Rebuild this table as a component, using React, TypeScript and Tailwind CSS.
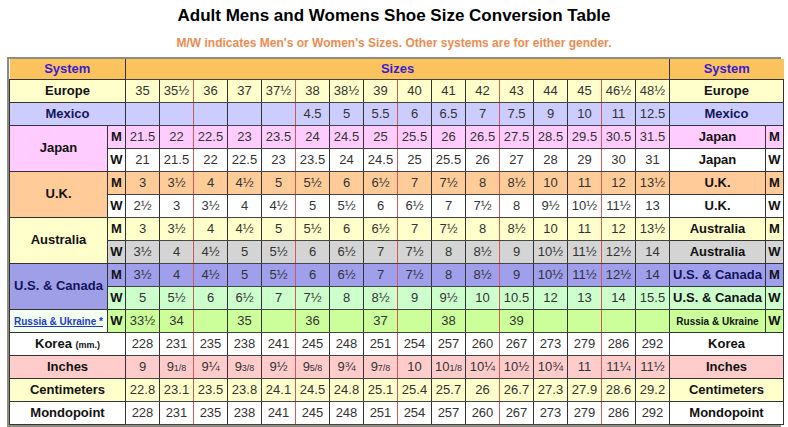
import React from 'react';

type Cell = React.ReactNode;

interface SizeRow {
  label: React.ReactNode;
  rightLabel?: React.ReactNode;
  bg: string;
  values: Cell[];
  mw?: 'M' | 'W';
  // label cell spans 2 rows (first row of a pair)
  labelSpan?: number;
  labelBg?: string;
  hideLabel?: boolean;
  rightBg?: string;
}

const frac = (whole: string, f: string) => (
  <span>
    {whole}
    <span className="text-[9px]">{f}</span>
  </span>
);

const rows: SizeRow[] = [
  {
    label: 'Europe',
    bg: 'bg-[#ffffcc]',
    values: ['35', '35½', '36', '37', '37½', '38', '38½', '39', '40', '41', '42', '43', '44', '45', '46½', '48½'],
  },
  {
    label: <span className="text-[#14145a]">Mexico</span>,
    rightLabel: <span className="text-[#14145a]">Mexico</span>,
    bg: 'bg-[#ccccff]',
    values: ['', '', '', '', '', '4.5', '5', '5.5', '6', '6.5', '7', '7.5', '9', '10', '11', '12.5'],
  },
  {
    label: 'Japan',
    labelSpan: 2,
    labelBg: 'bg-[#ffccff]',
    mw: 'M',
    bg: 'bg-[#ffccff]',
    values: ['21.5', '22', '22.5', '23', '23.5', '24', '24.5', '25', '25.5', '26', '26.5', '27.5', '28.5', '29.5', '30.5', '31.5'],
  },
  {
    label: 'Japan',
    hideLabel: true,
    mw: 'W',
    bg: 'bg-white',
    values: ['21', '21.5', '22', '22.5', '23', '23.5', '24', '24.5', '25', '25.5', '26', '27', '28', '29', '30', '31'],
  },
  {
    label: 'U.K.',
    labelSpan: 2,
    labelBg: 'bg-[#ffcc99]',
    mw: 'M',
    bg: 'bg-[#ffcc99]',
    values: ['3', '3½', '4', '4½', '5', '5½', '6', '6½', '7', '7½', '8', '8½', '10', '11', '12', '13½'],
  },
  {
    label: 'U.K.',
    hideLabel: true,
    mw: 'W',
    bg: 'bg-white',
    values: ['2½', '3', '3½', '4', '4½', '5', '5½', '6', '6½', '7', '7½', '8', '9½', '10½', '11½', '13'],
  },
  {
    label: 'Australia',
    labelSpan: 2,
    labelBg: 'bg-[#ffffcc]',
    mw: 'M',
    bg: 'bg-[#ffffcc]',
    values: ['3', '3½', '4', '4½', '5', '5½', '6', '6½', '7', '7½', '8', '8½', '10', '11', '12', '13½'],
  },
  {
    label: 'Australia',
    hideLabel: true,
    mw: 'W',
    bg: 'bg-[#d4d4d4]',
    values: ['3½', '4', '4½', '5', '5½', '6', '6½', '7', '7½', '8', '8½', '9', '10½', '11½', '12½', '14'],
  },
  {
    label: <span className="text-[#14145a]">U.S. &amp; Canada</span>,
    rightLabel: <span className="text-[#14145a]">U.S. &amp; Canada</span>,
    labelSpan: 2,
    labelBg: 'bg-[#9f9fe8]',
    mw: 'M',
    bg: 'bg-[#9f9fec]',
    values: ['3½', '4', '4½', '5', '5½', '6', '6½', '7', '7½', '8', '8½', '9', '10½', '11½', '12½', '14'],
  },
  {
    label: 'U.S. & Canada',
    hideLabel: true,
    mw: 'W',
    bg: 'bg-[#ccffcc]',
    values: ['5', '5½', '6', '6½', '7', '7½', '8', '8½', '9', '9½', '10', '10.5', '12', '13', '14', '15.5'],
  },
  {
    label: (
      <span className="text-[10px] text-[#1a3cc8] underline">Russia &amp; Ukraine *</span>
    ),
    rightLabel: <span className="text-[10px]">Russia &amp; Ukraine</span>,
    labelBg: 'bg-[#f4fff0]',
    mw: 'W',
    bg: 'bg-[#ccff99]',
    values: ['33½', '34', '', '35', '', '36', '', '37', '', '38', '', '39', '', '', '', ''],
  },
  {
    label: (
      <span>
        Korea <span className="text-[9px]">(mm.)</span>
      </span>
    ),
    rightLabel: 'Korea',
    bg: 'bg-white',
    values: ['228', '231', '235', '238', '241', '245', '248', '251', '254', '257', '260', '267', '273', '279', '286', '292'],
  },
  {
    label: 'Inches',
    bg: 'bg-[#ffcccc]',
    values: [
      '9', frac('9', '1/8'), '9¼', frac('9', '3/8'), '9½', frac('9', '5/8'), '9¾', frac('9', '7/8'),
      '10', frac('10', '1/8'), '10¼', '10½', '10¾', '11', '11¼', '11½',
    ],
  },
  {
    label: 'Centimeters',
    bg: 'bg-[#ffffcc]',
    values: ['22.8', '23.1', '23.5', '23.8', '24.1', '24.5', '24.8', '25.1', '25.4', '25.7', '26', '26.7', '27.3', '27.9', '28.6', '29.2'],
  },
  {
    label: 'Mondopoint',
    bg: 'bg-white',
    values: ['228', '231', '235', '238', '241', '245', '248', '251', '254', '257', '260', '267', '273', '279', '286', '292'],
  },
];

// borders drawn in red between some size columns
const redAfter = [1, 4, 7, 10, 13];

export default function App() {
  return (
    <div className="w-[788px] h-[427px] bg-white font-['Liberation_Sans',Arial,sans-serif] overflow-hidden">
      <h1 className="pt-[6px] text-center text-[17px] leading-[20px] font-bold text-black">
        Adult Mens and Womens Shoe Size Conversion Table
      </h1>
      <p className="mt-[9px] text-center text-[12px] leading-[16px] font-bold text-[#ec8b4f]">
        M/W indicates Men's or Women's Sizes. Other systems are for either gender.
      </p>
      <div className="ml-[7px] mt-[6px] w-[774px] border-2 border-[#8c8c80]">
        <table className="w-full table-fixed border-collapse text-[13px] text-[#333]">
          <colgroup>
            <col className="w-[98px]" />
            <col className="w-[18px]" />
            {Array.from({ length: 16 }).map((_, i) => (
              <col key={i} className="w-[34px]" />
            ))}
            <col className="w-[96px]" />
            <col className="w-[18px]" />
          </colgroup>
          <tbody>
            <tr className="h-[20px] bg-[#fbc35e]">
              <td colSpan={2} className="border-r border-[#333] p-0 text-center font-bold text-[#3a1ccf]">
                System
              </td>
              <td colSpan={16} className="border-r border-[#333] p-0 text-center font-bold text-[#3a1ccf]">
                Sizes
              </td>
              <td colSpan={2} className="p-0 text-center font-bold text-[#3a1ccf]">
                System
              </td>
            </tr>
            {rows.map((row, ri) => (
              <tr key={ri} className={`h-[23px] ${row.bg}`}>
                {!row.hideLabel && (
                  <td
                    colSpan={row.mw ? 1 : 2}
                    rowSpan={row.labelSpan ?? 1}
                    className={`border border-[#333] p-0 text-center font-bold text-[#111] whitespace-nowrap ${row.labelBg ?? row.bg}`}
                  >
                    {row.label}
                  </td>
                )}
                {row.mw && (
                  <td className="border border-[#333] p-0 text-center font-bold text-[#111]">{row.mw}</td>
                )}
                {row.values.map((v, i) => (
                  <td
                    key={i}
                    className={`border-y border-y-[#444] border-l p-0 text-center whitespace-nowrap ${
                      redAfter.includes(i - 1) ? 'border-l-[#d05a5a]' : 'border-l-[#333]'
                    }`}
                  >
                    {v}
                  </td>
                ))}
                <td
                  colSpan={row.mw ? 1 : 2}
                  className={`border border-[#333] p-0 text-center font-bold text-[#111] whitespace-nowrap ${row.rightBg ?? row.bg}`}
                >
                  {row.rightLabel ?? row.label}
                </td>
                {row.mw && (
                  <td className="border border-[#333] p-0 text-center font-bold text-[#111]">{row.mw}</td>
                )}
              </tr>
            ))}
          </tbody>
        </table>
      </div>
    </div>
  );
}
